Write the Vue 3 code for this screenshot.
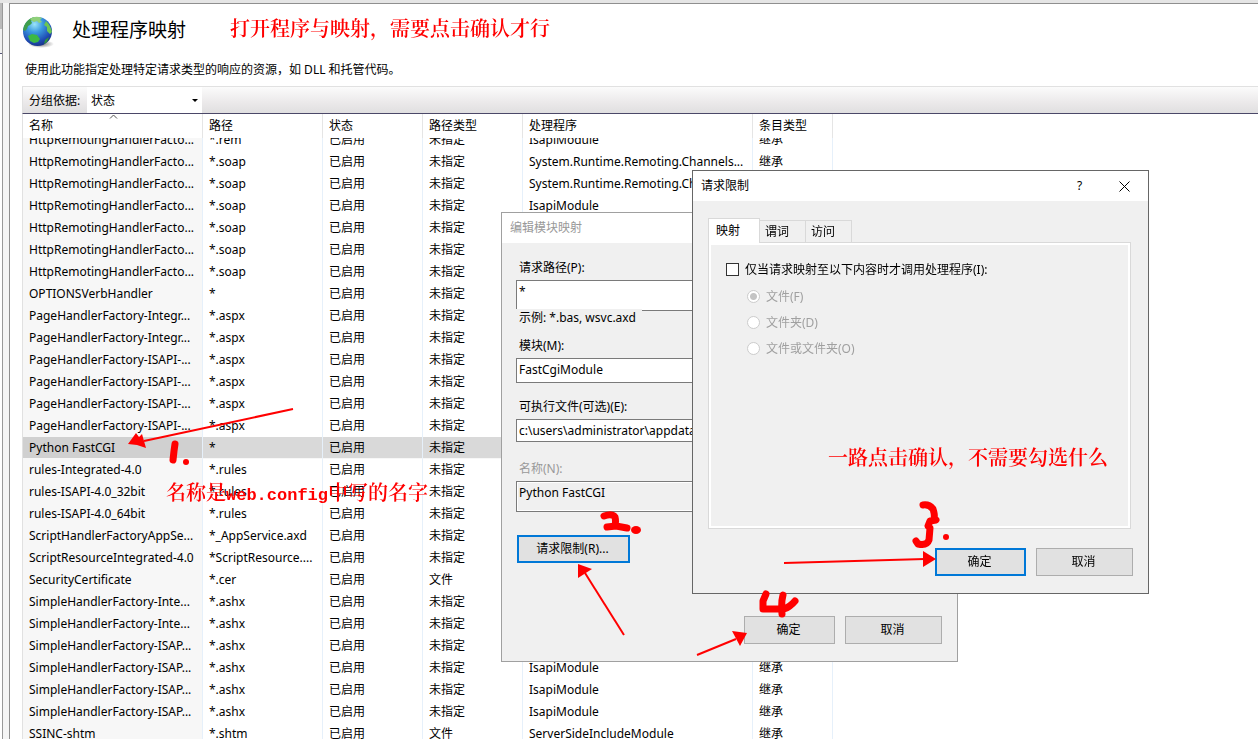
<script setup>
import { onMounted, ref } from 'vue'

const columns = ['名称', '路径', '状态', '路径类型', '处理程序', '条目类型']
const remoting = 'HttpRemotingHandlerFacto...'
const channels = 'System.Runtime.Remoting.Channels...'
const isapi = 'IsapiModule'
const inherited = '继承'

const rows = [
  [remoting, '*.rem', '未指定', isapi, inherited],
  [remoting, '*.soap', '未指定', channels, inherited],
  [remoting, '*.soap', '未指定', channels],
  [remoting, '*.soap', '未指定', isapi],
  [remoting, '*.soap', '未指定'],
  [remoting, '*.soap', '未指定'],
  [remoting, '*.soap', '未指定'],
  ['OPTIONSVerbHandler', '*', '未指定'],
  ['PageHandlerFactory-Integr...', '*.aspx', '未指定'],
  ['PageHandlerFactory-Integr...', '*.aspx', '未指定'],
  ['PageHandlerFactory-ISAPI-...', '*.aspx', '未指定'],
  ['PageHandlerFactory-ISAPI-...', '*.aspx', '未指定'],
  ['PageHandlerFactory-ISAPI-...', '*.aspx', '未指定'],
  ['PageHandlerFactory-ISAPI-...', '*.aspx', '未指定'],
  ['Python FastCGI', '*', '未指定'],
  ['rules-Integrated-4.0', '*.rules', '未指定'],
  ['rules-ISAPI-4.0_32bit', '*.rules', '未指定'],
  ['rules-ISAPI-4.0_64bit', '*.rules', '未指定'],
  ['ScriptHandlerFactoryAppSe...', '*_AppService.axd', '未指定'],
  ['ScriptResourceIntegrated-4.0', '*ScriptResource....', '未指定'],
  ['SecurityCertificate', '*.cer', '文件'],
  ['SimpleHandlerFactory-Inte...', '*.ashx', '未指定'],
  ['SimpleHandlerFactory-Inte...', '*.ashx', '未指定'],
  ['SimpleHandlerFactory-ISAP...', '*.ashx', '未指定'],
  ['SimpleHandlerFactory-ISAP...', '*.ashx', '未指定', isapi, inherited],
  ['SimpleHandlerFactory-ISAP...', '*.ashx', '未指定', isapi, inherited],
  ['SimpleHandlerFactory-ISAP...', '*.ashx', '未指定', isapi, inherited],
  ['SSINC-shtm', '*.shtm', '文件', 'ServerSideIncludeModule', inherited],
]

const selected = 14
const list = ref(null)
onMounted(() => {
  list.value.scrollTop = 9
})
</script>

<template>
  <div class="window">
    <aside class="tree"><div class="tree-head"></div><div class="tree-bar"></div></aside>
    <main class="pane">
      <header class="heading">
        <svg class="globe" viewBox="0 0 32 34" aria-hidden="true">
          <defs>
            <radialGradient id="sea" cx="0.4" cy="0.25" r="0.8">
              <stop offset="0" stop-color="#9be4f8" />
              <stop offset="0.35" stop-color="#3c9be0" />
              <stop offset="0.75" stop-color="#1f4cb4" />
              <stop offset="1" stop-color="#182f80" />
            </radialGradient>
            <radialGradient id="shade">
              <stop offset="0" stop-color="#777" />
              <stop offset="1" stop-color="#fff" />
            </radialGradient>
          </defs>
          <ellipse cx="19" cy="28" rx="13" ry="4" fill="url(#shade)" />
          <circle cx="15.500" cy="15.500" r="14.500" fill="url(#sea)" />
          <path d="M2 10 Q5 3 12 1 L11 3 9 5 10 7 8 9 6 10 5 13 3 15 1 14Z" fill="#3f9e4c" />
          <path d="M8 3 Q12 0 17 1 L20 2 18 4 20 6 17 7 15 5 12 6 10 5Z" fill="#8fd07a" />
          <path d="M24 5 Q29 10 30 16 L28 18 25 15 25 11 22 9Z" fill="#6cc653" />
          <path d="M6 20 L10 18 15 19 18 23 16 26 12 27 8 25Z" fill="#3cb845" />
          <path d="M27 21 L25 26 22 28 23 24Z" fill="#31953c" />
        </svg>
        <h1>处理程序映射</h1>
      </header>
      <p class="intro">使用此功能指定处理特定请求类型的响应的资源，如 DLL 和托管代码。</p>
      <div class="toolbar">
        <label for="group">分组依据:</label>
        <span class="combo">
          <select id="group"><option>状态</option></select>
          <svg viewBox="0 0 6 3" aria-hidden="true"><path d="M0 0H6L3 3Z" /></svg>
        </span>
      </div>
      <div ref="list" class="list">
        <table>
          <colgroup><col v-for="(c, i) in columns" :key="c" :class="'col' + i" /></colgroup>
          <thead>
            <tr>
              <th v-for="(c, i) in columns" :key="c">
                {{ c }}
                <svg v-if="i === 0" class="sort" viewBox="0 0 9 5" aria-hidden="true"><path d="M1 4.500L4.500 1L8 4.500" /></svg>
              </th>
            </tr>
          </thead>
          <tbody>
            <tr v-for="(r, i) in rows" :key="i" :class="{ selected: i === selected }">
              <td>{{ r[0] }}</td><td>{{ r[1] }}</td><td>已启用</td><td>{{ r[2] }}</td><td>{{ r[3] }}</td><td>{{ r[4] }}</td>
            </tr>
          </tbody>
        </table>
      </div>
    </main>

    <section class="dialog edit" aria-label="编辑模块映射">
      <div class="titlebar inactive"><span>编辑模块映射</span></div>
      <form class="edit-form" @submit.prevent>
        <label for="path">请求路径(P):</label>
        <input id="path" class="tall" type="text" value="*" />
        <p class="example">示例: *.bas, wsvc.axd</p>
        <label for="module">模块(M):</label>
        <input id="module" class="module" type="text" value="FastCgiModule" />
        <label for="exe">可执行文件(可选)(E):</label>
        <input id="exe" type="text" value="c:\users\administrator\appdata" />
        <label for="name" class="dim">名称(N):</label>
        <input id="name" class="tall locked" type="text" value="Python FastCGI" readonly />
        <button type="button" class="btn primary restrict">请求限制(R)...</button>
        <div class="actions">
          <button type="button" class="btn ok">确定</button>
          <button type="button" class="btn cancel">取消</button>
        </div>
      </form>
    </section>

    <section class="dialog limits" aria-label="请求限制">
      <div class="titlebar">
        <span>请求限制</span>
        <button type="button" class="tool" aria-label="帮助">?</button>
        <button type="button" class="tool" aria-label="关闭">
          <svg viewBox="0 0 11 11" width="11" height="11"><path d="M0.500 0.500L10.500 10.500M10.500 0.500L0.500 10.500" /></svg>
        </button>
      </div>
      <div class="limits-body">
        <div class="tabs" role="tablist">
          <button type="button" role="tab" class="tab active" aria-selected="true">映射</button>
          <button type="button" role="tab" class="tab">谓词</button>
          <button type="button" role="tab" class="tab">访问</button>
        </div>
        <div class="panel">
          <label class="check"><input type="checkbox" />仅当请求映射至以下内容时才调用处理程序(I):</label>
          <label class="radio"><input type="radio" name="kind" checked disabled />文件(F)</label>
          <label class="radio"><input type="radio" name="kind" disabled />文件夹(D)</label>
          <label class="radio"><input type="radio" name="kind" disabled />文件或文件夹(O)</label>
        </div>
        <div class="actions">
          <button type="button" class="btn primary ok">确定</button>
          <button type="button" class="btn cancel">取消</button>
        </div>
      </div>
    </section>

    <svg class="marks" width="1258" height="739" aria-hidden="true">
      <g class="line">
        <path d="M293 409L144 441" />
        <path d="M624 635L585 573" />
        <path d="M784 563L925 559" />
        <path d="M697 655L736 639" />
      </g>
      <g class="head">
        <path d="M128 444L136 433L139 437L142 434L146 448L137 445Z" />
        <path d="M578 564L592 569L578 578Z" />
        <path d="M936 559L923 551V567Z" />
        <path d="M747 633L732 631L740 646Z" />
      </g>
      <g class="pen">
        <path d="M175 444L174 451L173 460" />
        <path d="M604 516Q612 513 615 517Q616 521 615 526M607 527L616 526L627 528" />
        <path d="M923 505Q929 504 933 509Q935 515 934 519L936 520L930 521L928 526L930 528L929 540Q927 546 918 544L916 541" />
        <path d="M766 594L763 601V609Q778 609 784 609Q790 607 795 601M783 595Q781 602 782 614" />
      </g>
      <g class="head">
        <circle cx="186" cy="462" r="3" />
        <ellipse cx="636" cy="530" rx="5" ry="4" />
        <circle cx="946" cy="537" r="3" />
      </g>
    </svg>
    <p class="note note-top">打开程序与映射，需要点击确认才行</p>
    <p class="note note-name">名称是<code>web.config</code>中写的名字</p>
    <p class="note note-ok">一路点击确认，不需要勾选什么</p>
  </div>
</template>

<style>
body { background: #fff; }
</style>

<style scoped>
* { box-sizing: border-box; }
.window {
  position: relative; display: flex; height: 100vh; overflow: hidden;
  border-top: 3px solid #e5e5e5; background: #f5f5f5; color: #000;
  font: 12px/22px "Noto Sans", "Noto Sans CJK SC", sans-serif;
}
p, h1 { margin: 0; font-weight: 400; }
button, input, select { font: inherit; color: inherit; }

.tree { width: 3px; margin-right: 6px; border-right: 1px solid #999; background: #fff; }
.tree-head { height: 26px; background: #bbb; }
.tree-bar { height: 25px; background: #f0f0f0; border-bottom: 1px solid #557; }

.pane {
  flex: 1; min-width: 0; display: flex; flex-direction: column;
  padding-left: 12px; border: solid #8f8f8f; border-width: 1px 0 0 1px; background: #fff;
}
.heading { display: flex; height: 54px; }
.globe { width: 32px; height: 34px; margin-top: 12px; }
h1 { margin: 12px 0 0 18px; font-size: 19px; line-height: 28px; }
.intro { height: 28px; padding-left: 3px; line-height: 24px; }
.toolbar {
  display: flex; height: 28px; line-height: 28px;
  border: solid #e1e1e1; border-width: 1px 0 0 1px;
  background: linear-gradient(#fbfbfb, #ebe9ea 60%, #e0dfe0);
  border-bottom: 1px solid #4b4868;
}
.toolbar label { width: 64px; padding-left: 6px; }
.combo { position: relative; width: 115px; }
.combo select {
  display: block; width: 100%; height: 26px; padding: 0 4px; border: 0;
  appearance: none; background: #fff; border-radius: 0;
}
.combo svg { position: absolute; right: 4px; top: 12px; width: 6px; height: 3px; }

.list { flex: 1; min-height: 0; overflow: hidden; border-left: 1px solid #e1e1e1; }
table { table-layout: fixed; width: 810px; border-collapse: separate; border-spacing: 0; }
.col0 { width: 180px; }
.col1 { width: 120px; }
.col2, .col3 { width: 100px; }
.col4 { width: 230px; }
.col5 { width: 80px; }
th, td { padding: 0 0 0 6px; text-align: left; font-weight: 400; white-space: nowrap; overflow: hidden; }
th { position: sticky; top: 0; height: 24px; background: #fff; border-right: 1px solid #e5e5e5; }
td { height: 22px; border-right: 1px solid #e6f0fa; }
td:first-child { background: #f7f7f7; }
.selected td { background: #d9d9d9; border-bottom: 1px solid #f7f7f7; line-height: 21px; }
.selected td:first-child { background: #d0d0d0; }
.sort { position: absolute; left: 86px; top: 0; width: 9px; height: 5px; fill: none; stroke: #555; }

.dialog { position: absolute; display: flex; flex-direction: column; width: 457px; background: #f0f0f0; }
.edit { left: 501px; top: 209px; border: 1px solid #a0a0a0; }
.limits { left: 692px; top: 167px; border: 1px solid #666; }
.titlebar { display: flex; align-items: center; height: 30px; padding: 0 1px 0 8px; background: #fff; }
.titlebar span { flex: 1; }
.inactive, .dim { color: #999; }
.tool { display: flex; align-items: center; justify-content: center; width: 45px; height: 28px; padding: 0; border: 0; background: none; }
.tool path { fill: none; stroke: #000; }

.edit-form { display: flex; flex-direction: column; padding: 14px 15px 17px 14px; }
.edit-form label { padding-left: 3px; }
.edit-form input { height: 23px; margin-bottom: 16px; padding: 0 2px; border: 1px solid #7a7a7a; border-radius: 0; background: #fff; outline: 0; }
.edit-form input.tall { height: 31px; padding-bottom: 8px; }
.edit-form .module { height: 25px; margin-bottom: 13px; padding-bottom: 2px; }
#path, #module, #exe, #name { margin-top: 1px; }
#path { margin-bottom: 0; }
.example { z-index: 1; width: 126px; height: 26px; margin-top: -2px; padding-left: 3px; line-height: 18px; background: #f0f0f0; white-space: nowrap; }
.edit-form input.locked { margin-bottom: 23px; background: #f0f0f0; box-shadow: inset 0 0 0 1px #fff; }
.btn { height: 28px; padding: 0 2px 0 0; border: 1px solid #adadad; background: #e1e1e1; line-height: 24px; }
.primary { border: 2px solid #0078d7; }
.restrict { width: 113px; margin: 0 0 53px 1px; }
.actions { display: flex; justify-content: flex-end; gap: 10px; }
.ok { width: 91px; }
.cancel { width: 97px; }

.limits-body { padding: 17px 15px; }
.tabs { display: flex; align-items: flex-end; height: 24px; }
.tab { width: 46px; height: 22px; padding: 0 0 0 5px; border: 1px solid #d9d9d9; border-width: 1px 1px 0 0; background: #f0f0f0; text-align: left; line-height: 20px; }
.tab.active { z-index: 1; position: relative; width: 52px; height: 25px; margin-bottom: -1px; padding-left: 7px; border-left-width: 1px; background: #fff; }
.panel {
  display: flex; flex-direction: column; height: 287px; margin: 0 2px 19px 0; padding: 16px 0 0 15px;
  border: 1px solid #d9d9d9; background: #f0f0f0; box-shadow: inset 0 0 0 2px #fff;
}
.panel label { display: flex; align-items: center; height: 22px; white-space: nowrap; }
.panel input { appearance: none; width: 13px; height: 13px; margin: 0 6px 2px 2px; border: 1px solid #333; background: #fff; }
.panel .radio { height: 26px; padding-left: 21px; color: #a0a0a0; }
.panel .check + .radio { margin-top: 3px; }
.panel .radio input { border-color: #ccc; border-radius: 50%; }
.panel .radio input:checked { background: radial-gradient(#c4c4c4 0 3px, #fff 4px); }

.marks { position: absolute; left: 0; top: -3px; pointer-events: none; }
.line { fill: none; stroke: #f00; stroke-width: 2; }
.head { fill: #f00; }
.pen { fill: none; stroke: #f00; stroke-width: 7; stroke-linecap: round; stroke-linejoin: round; }
.note { position: absolute; color: #f00; font-family: "Noto Serif CJK SC", "Noto Sans CJK SC", serif; font-size: 20px; font-weight: 600; line-height: 28px; white-space: nowrap; }
.note code { font: 700 17px/20px "Liberation Mono", monospace; }
.note-top { left: 230px; top: 11px; }
.note-name { left: 166px; top: 475px; }
.note-ok { left: 828px; top: 440px; }
</style>
